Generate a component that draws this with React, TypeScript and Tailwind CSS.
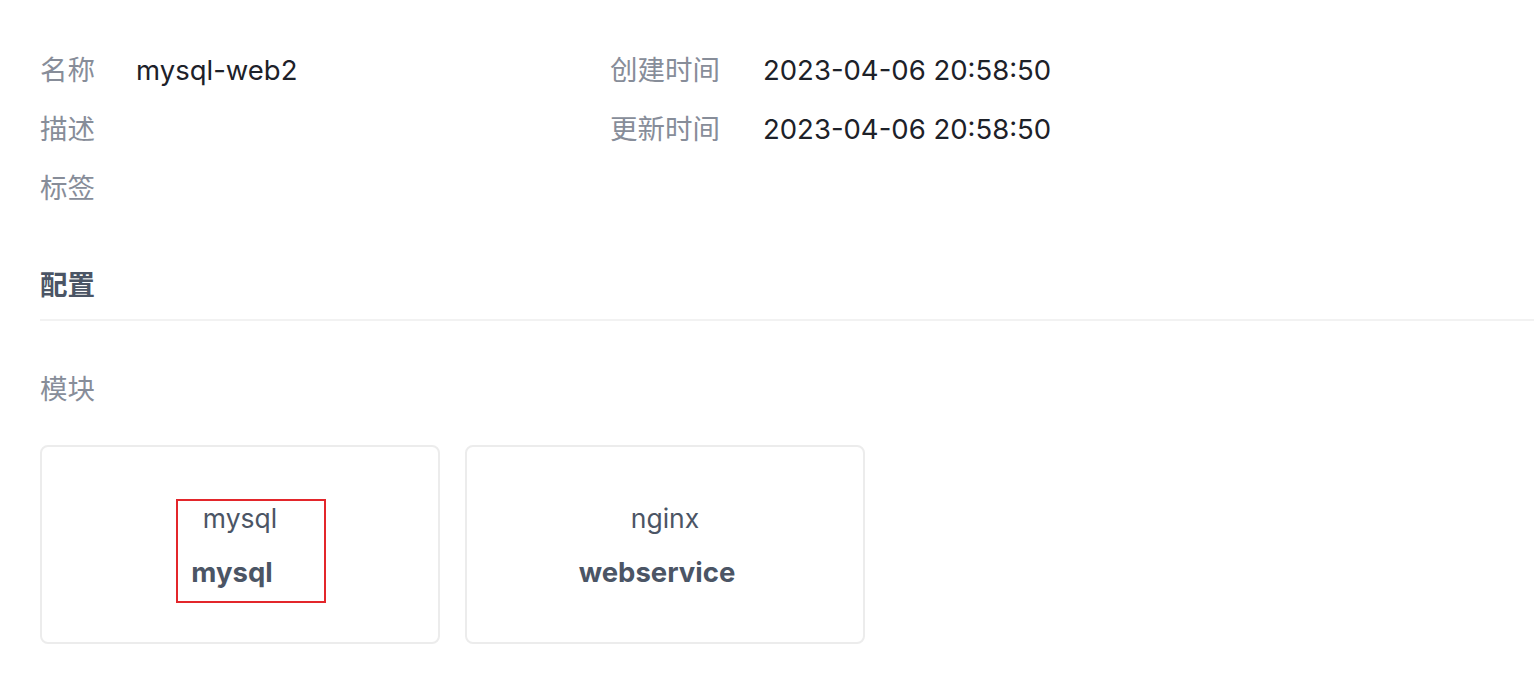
const FONT = "font-['Inter','Noto_Sans_CJK_SC',sans-serif]"

function Field({ label, value, labelWidth }: { label: string; value?: string; labelWidth: string }) {
  return (
    <div className="flex h-[59px] items-center">
      <div className={`${labelWidth} shrink-0 text-[#878d99]`}>{label}</div>
      <div className="text-[#1d2129]">{value}</div>
    </div>
  )
}

function ModuleCard({ type, name, marked }: { type: string; name: string; marked?: boolean }) {
  return (
    <div className="relative flex h-[199px] w-[400px] flex-col items-center justify-center rounded-lg border-2 border-[#ececec] bg-white">
      <div className="mt-[2px] text-[26.5px] text-[#4b5565]">{type}</div>
      <div className="mt-[27px] pr-4 text-[27.5px] font-bold text-[#4b5565]">{name}</div>
      {marked && (
        <div className="absolute left-[134px] top-[52px] h-[104px] w-[150px] border-2 border-[#e3262b]" />
      )}
    </div>
  )
}

export default function App() {
  return (
    <div className={`${FONT} min-h-screen bg-white pl-10 pt-[41px] text-[27.5px] leading-none`}>
      <div className="flex">
        <div className="w-[570px]">
          <Field label="名称" value="mysql-web2" labelWidth="w-[96px]" />
          <Field label="描述" labelWidth="w-[96px]" />
          <Field label="标签" labelWidth="w-[96px]" />
        </div>
        <div>
          <Field label="创建时间" value="2023-04-06 20:58:50" labelWidth="w-[153px]" />
          <Field label="更新时间" value="2023-04-06 20:58:50" labelWidth="w-[153px]" />
        </div>
      </div>
      <div className="mt-[54px] border-b-2 border-[#f2f2f2] pb-[19px] font-bold text-[#4b5565]">配置</div>
      <div className="mt-[55px] text-[#878d99]">模块</div>
      <div className="mt-[42px] flex gap-[25px]">
        <ModuleCard type="mysql" name="mysql" marked />
        <ModuleCard type="nginx" name="webservice" />
      </div>
    </div>
  )
}
